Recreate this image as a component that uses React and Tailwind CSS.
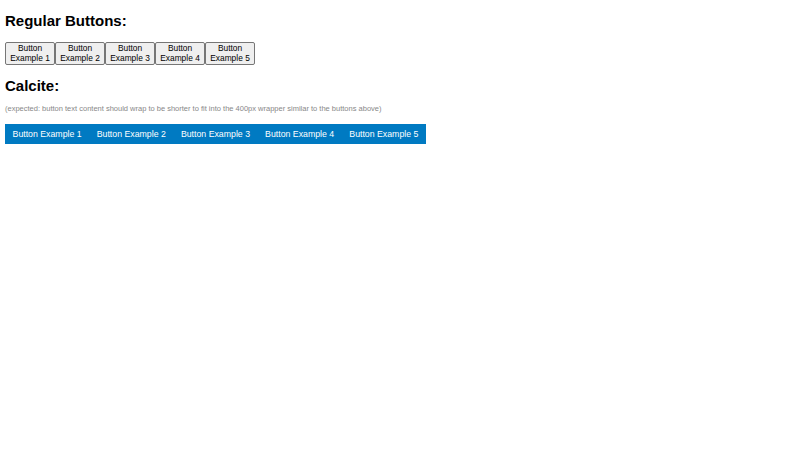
// App.jsx
const labels = [1, 2, 3, 4, 5];

function RegularButtons() {
  return (
    <div className="flex w-[250px]">
      {labels.map((n) => (
        <button
          key={n}
          className="w-[50px] h-[23px] flex flex-col items-center justify-center pt-[1px] border border-[#767676] rounded-[2px] bg-[#efefef] text-black text-[8.4px] leading-[9.7px]"
        >
          <span>Button</span>
          <span>Example {n}</span>
        </button>
      ))}
    </div>
  );
}

function CalciteButtons() {
  return (
    <div className="flex w-[421px]">
      {labels.map((n) => (
        <button
          key={n}
          className="w-[84.2px] h-[20px] flex items-center justify-center pt-[1px] bg-[#007ac2] text-white text-[8.75px] whitespace-nowrap"
        >
          Button Example {n}
        </button>
      ))}
    </div>
  );
}

export default function App() {
  return (
    <div
      className="w-[800px] h-[450px] bg-white px-[5px] overflow-hidden"
      style={{ fontFamily: '"Liberation Sans", Arial, sans-serif' }}
    >
      <h2 className="mt-[12.4px] mb-[12.5px] text-[15px] leading-[17px] font-bold text-black">
        Regular Buttons:
      </h2>
      <RegularButtons />

      <h2 className="mt-[12.5px] mb-[9.5px] text-[15px] leading-[17px] font-bold text-black">
        Calcite:
      </h2>
      <p className="text-[7.5px] leading-[9px] text-[#888888] mb-[11px]">
        (expected: button text content should wrap to be shorter to fit into the 400px wrapper similar to the buttons above)
      </p>
      <CalciteButtons />
    </div>
  );
}
